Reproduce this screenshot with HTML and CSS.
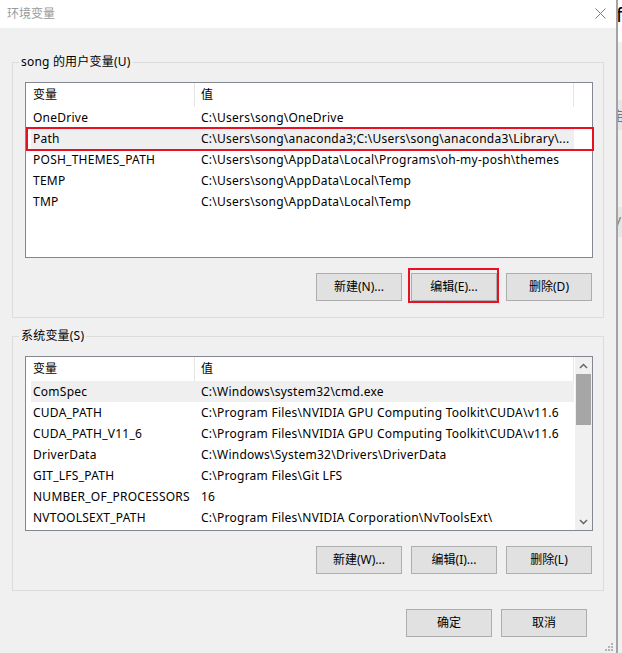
FILE: index.html
```html
<!DOCTYPE html>
<html lang="zh-CN">
<head>
<meta charset="utf-8">
<title>环境变量</title>
<link rel="stylesheet" href="styles.css">
</head>
<body>
<div class="page">
  <div class="dialog">
    <div class="titlebar">
      <span class="title">环境变量</span>
      <svg class="close" width="11" height="11" viewBox="0 0 11 11"><path d="M0.5 0.5 L10.5 10.5 M10.5 0.5 L0.5 10.5" stroke="#7a7a7a" stroke-width="1" fill="none"/></svg>
    </div>
    <div class="content">
      <fieldset class="group group-user">
        <legend>song 的用户变量(U)</legend>
        <div class="list list-user">
          <div class="list-main">
            <div class="grid head"><div class="c1">变量</div><div class="c2">值</div></div>
            <div class="grid row"><div class="c1">OneDrive</div><div class="c2">C:\Users\song\OneDrive</div></div>
            <div class="grid row sel marked"><div class="c1">Path</div><div class="c2">C:\Users\song\anaconda3;C:\Users\song\anaconda3\Library\...</div></div>
            <div class="grid row"><div class="c1">POSH_THEMES_PATH</div><div class="c2">C:\Users\song\AppData\Local\Programs\oh-my-posh\themes</div></div>
            <div class="grid row"><div class="c1">TEMP</div><div class="c2">C:\Users\song\AppData\Local\Temp</div></div>
            <div class="grid row"><div class="c1">TMP</div><div class="c2">C:\Users\song\AppData\Local\Temp</div></div>
          </div>
        </div>
        <div class="btnrow">
          <button class="btn">新建(N)...</button>
          <button class="btn marked-btn">编辑(E)...</button>
          <button class="btn">删除(D)</button>
        </div>
      </fieldset>

      <fieldset class="group group-sys">
        <legend>系统变量(S)</legend>
        <div class="list list-sys">
          <div class="list-main">
            <div class="grid head"><div class="c1">变量</div><div class="c2">值</div></div>
            <div class="grid row sel"><div class="c1">ComSpec</div><div class="c2">C:\Windows\system32\cmd.exe</div></div>
            <div class="grid row"><div class="c1">CUDA_PATH</div><div class="c2">C:\Program Files\NVIDIA GPU Computing Toolkit\CUDA\v11.6</div></div>
            <div class="grid row"><div class="c1">CUDA_PATH_V11_6</div><div class="c2">C:\Program Files\NVIDIA GPU Computing Toolkit\CUDA\v11.6</div></div>
            <div class="grid row"><div class="c1">DriverData</div><div class="c2">C:\Windows\System32\Drivers\DriverData</div></div>
            <div class="grid row"><div class="c1">GIT_LFS_PATH</div><div class="c2">C:\Program Files\Git LFS</div></div>
            <div class="grid row"><div class="c1">NUMBER_OF_PROCESSORS</div><div class="c2">16</div></div>
            <div class="grid row"><div class="c1">NVTOOLSEXT_PATH</div><div class="c2">C:\Program Files\NVIDIA Corporation\NvToolsExt\</div></div>
          </div>
          <div class="scrollbar">
            <div class="arrow"><svg width="9" height="6" viewBox="0 0 9 6"><path d="M1 5 L4.5 1.5 L8 5" stroke="#606060" stroke-width="1.4" fill="none"/></svg></div>
            <div class="track"><div class="thumb"></div></div>
            <div class="arrow"><svg width="9" height="6" viewBox="0 0 9 6"><path d="M1 1 L4.5 4.5 L8 1" stroke="#606060" stroke-width="1.4" fill="none"/></svg></div>
          </div>
        </div>
        <div class="btnrow">
          <button class="btn">新建(W)...</button>
          <button class="btn">编辑(I)...</button>
          <button class="btn">删除(L)</button>
        </div>
      </fieldset>

      <div class="footer">
        <button class="btn">确定</button>
        <button class="btn">取消</button>
      </div>
      <svg class="grip" width="10" height="10" viewBox="0 0 10 10" fill="#b4b4b4">
        <rect x="8" y="0" width="2" height="2"/>
        <rect x="5" y="3" width="2" height="2"/><rect x="8" y="3" width="2" height="2"/>
        <rect x="2" y="6" width="2" height="2"/><rect x="5" y="6" width="2" height="2"/><rect x="8" y="6" width="2" height="2"/>
      </svg>
    </div>
  </div>
  <div class="backdrop">
    <div class="bd-top">f</div>
    <div class="bd-band b1">亩</div>
    <div class="bd-band b2">/</div>
  </div>
</div>
</body>
</html>
```

FILE: styles.css
```css
* { box-sizing: border-box; }
html, body { margin: 0; padding: 0; }
body {
  background: #f0f0f0;
  font-family: "Noto Sans", "Noto Sans CJK SC", sans-serif;
  font-size: 12px;
  color: #000;
}
.page {
  display: flex;
  width: 622px;
  height: 653px;
  overflow: hidden;
}
.dialog {
  width: 618px;
  flex: none;
  height: 653px;
  border-right: 2px solid #a3a3a3;
  background: #f0f0f0;
  display: flex;
  flex-direction: column;
}
.titlebar {
  height: 28px;
  background: #fff;
  display: flex;
  align-items: center;
  justify-content: space-between;
  padding: 0 10px 2px 7px;
}
.title {
  color: #9a9a9a;
  font-family: "Noto Sans CJK SC", sans-serif;
  font-size: 12px;
  line-height: 16px;
}
.close { display: block; }
.content {
  position: relative;
  flex: 1;
  padding: 26px 12px 0 12px;
}
.group {
  margin: 0;
  min-width: 0;
  border: 1px solid #dcdcdc;
  padding: 12px 10px 16px 12px;
}
.group-sys { margin-top: 10px; }
.group legend {
  margin-left: -6px;
  padding: 0 2px;
  line-height: 16px;
  height: 16px;
  letter-spacing: 0.2px;
}
.list {
  background: #fff;
  border: 1px solid #828790;
  display: flex;
  position: relative;
}
.list-user { height: 176px; }
.list-sys { height: 175px; overflow: hidden; }
.list-main { flex: 1; min-width: 0; }
.grid {
  display: grid;
  grid-template-columns: 164px 1fr;
  margin-left: 5px;
  width: 543px;
}
.grid > div {
  white-space: nowrap;
  overflow: hidden;
}
.head { height: 24px; }
.head > div {
  line-height: 24px;
  border-right: 1px solid #e5e5e5;
}
.row { height: 21px; }
.row > div {
  line-height: 21px;
  letter-spacing: 0.25px;
}
.c1 { padding-left: 2px; }
.c2 { padding-left: 6px; }
.sel { background: #efefef; }
.marked { position: relative; }
.marked::after {
  content: "";
  position: absolute;
  left: -5px;
  right: -20px;
  top: -1px;
  bottom: -2px;
  border: 2px solid #e81123;
  pointer-events: none;
}
.scrollbar {
  width: 17px;
  flex: none;
  background: #f0f0f0;
  display: flex;
  flex-direction: column;
}
.arrow {
  height: 17px;
  display: flex;
  align-items: center;
  justify-content: center;
}
.track { flex: 1; padding: 0 1px; }
.thumb {
  height: 51px;
  background: #a6a6a6;
}
.btnrow {
  display: flex;
  justify-content: flex-end;
  gap: 9px;
  margin-top: 15px;
  padding-right: 1px;
}
.btn {
  width: 86px;
  height: 28px;
  margin: 0;
  padding: 0;
  border: 1px solid #adadad;
  background: #e1e1e1;
  font-family: "Noto Sans", "Noto Sans CJK SC", sans-serif;
  font-size: 12px;
  color: #000;
  line-height: 16px;
}
.marked-btn { position: relative; }
.marked-btn::after {
  content: "";
  position: absolute;
  left: -4px;
  right: -3px;
  top: -6px;
  bottom: -3px;
  border: 2px solid #e81123;
  pointer-events: none;
}
.footer {
  display: flex;
  justify-content: flex-end;
  gap: 9px;
  margin-top: 18px;
  padding-right: 17px;
}
.grip {
  position: absolute;
  right: 3px;
  bottom: 0;
}
.backdrop {
  flex: 1;
  display: flex;
  flex-direction: column;
  background: #f0f0f0;
  overflow: hidden;
}
.bd-top {
  height: 42px;
  background: #fff;
  font-size: 20px;
  line-height: 30px;
  color: #000;
  margin-left: -2px;
}
.bd-band {
  height: 30px;
  background: #e6e6e6;
  color: #777;
  font-size: 14px;
  line-height: 30px;
  margin-left: -7px;
}
.b1 { margin-top: 58px; font-family: "Noto Sans CJK SC", sans-serif; }
.b2 { margin-top: 77px; margin-left: -2px; }
```
